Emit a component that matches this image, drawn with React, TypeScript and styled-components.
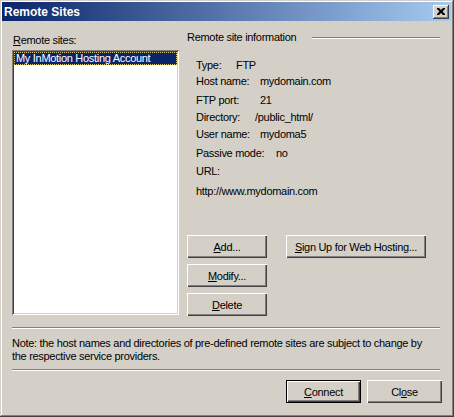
import styled, {createGlobalStyle} from 'styled-components';

const GlobalStyle = createGlobalStyle`
    html, body {
        margin: 0;
        padding: 0;
        background: #d4d0c8;
    }
    * {
        box-sizing: border-box;
    }
`;

interface InfoItem {
    label: string;
    value: string;
    labelWidth: number;
    gap: number;
}

// gap = space above the row, taken from the reference's uneven spacing
const infoItems: InfoItem[] = [
    {label: 'Type:', value: 'FTP', labelWidth: 40, gap: 0},
    {label: 'Host name:', value: 'mydomain.com', labelWidth: 64, gap: 3},
    {label: 'FTP port:', value: '21', labelWidth: 64, gap: 6},
    {label: 'Directory:', value: '/public_html/', labelWidth: 59, gap: 4},
    {label: 'User name:', value: 'mydoma5', labelWidth: 64, gap: 4},
    {label: 'Passive mode:', value: 'no', labelWidth: 80, gap: 6},
    {label: 'URL:', value: '', labelWidth: 40, gap: 5},
    {label: 'http://www.mydomain.com', value: '', labelWidth: 200, gap: 7},
];

function Mnemonic({text, index}: {text: string; index: number}) {
    return (
        <>
            {text.slice(0, index)}
            <u>{text[index]}</u>
            {text.slice(index + 1)}
        </>
    );
}

export default function App() {
    return (
        <>
            <GlobalStyle />
            <Window>
                <TitleBar>
                    <Title>Remote Sites</Title>
                    <CloseBox>
                        <svg width='8' height='7' viewBox='0 0 8 7'>
                            <path
                                d='M0 0h2l2 2 2-2h2v1l-2.5 2.5L8 6v1H6L4 5 2 7H0V6l2.5-2.5L0 1z'
                                fill='#000'
                            />
                        </svg>
                    </CloseBox>
                </TitleBar>

                <Body>
                    <TopSection>
                        <SitesColumn>
                            <FieldLabel>
                                <Mnemonic text='Remote sites:' index={0} />
                            </FieldLabel>
                            <ListBox>
                                <ListItem selected>My InMotion Hosting Account</ListItem>
                            </ListBox>
                        </SitesColumn>

                        <InfoColumn>
                            <GroupHeader>
                                <span>Remote site information</span>
                                <EtchedLine />
                            </GroupHeader>
                            <InfoList>
                                {infoItems.map((item) => (
                                    <InfoRow key={item.label} $gap={item.gap}>
                                        <InfoLabel $width={item.labelWidth}>{item.label}</InfoLabel>
                                        <span>{item.value}</span>
                                    </InfoRow>
                                ))}
                            </InfoList>
                            <ActionGrid>
                                <Button $width={80}>
                                    <Mnemonic text='Add...' index={0} />
                                </Button>
                                <Button $width={140}>
                                    <Mnemonic text='Sign Up for Web Hosting...' index={0} />
                                </Button>
                                <Button $width={80}>
                                    <Mnemonic text='Modify...' index={0} />
                                </Button>
                                <span />
                                <Button $width={80}>
                                    <Mnemonic text='Delete' index={0} />
                                </Button>
                            </ActionGrid>
                        </InfoColumn>
                    </TopSection>

                    <Separator />
                    <Note>
                        Note: the host names and directories of pre-defined remote sites are subject to change by
                        the respective service providers.
                    </Note>
                    <Separator />

                    <Footer>
                        <Button $width={75} $default>
                            <Mnemonic text='Connect' index={0} />
                        </Button>
                        <Button $width={75}>
                            <Mnemonic text='Close' index={2} />
                        </Button>
                    </Footer>
                </Body>
            </Window>
        </>
    );
}

const Window = styled.div`
    width: 454px;
    height: 417px;
    display: flex;
    flex-direction: column;
    background: #d4d0c8;
    padding: 2px 3px 3px 2px;
    box-shadow: inset -1px -1px 0 #404040, inset 1px 1px 0 #d4d0c8, inset -2px -2px 0 #808080,
        inset 2px 2px 0 #ffffff;
    font-family: 'Liberation Sans', Arial, sans-serif;
    font-size: 11px;
    letter-spacing: -0.3px;
    color: #000;
`;

const TitleBar = styled.div`
    height: 19px;
    display: flex;
    align-items: center;
    justify-content: space-between;
    padding: 0 2px 0 2px;
    background: linear-gradient(to right, #0a246a, #a6caf0);
`;

const Title = styled.span`
    color: #fff;
    font-weight: bold;
    font-size: 12px;
    letter-spacing: 0;
`;

const CloseBox = styled.div`
    width: 16px;
    height: 14px;
    display: flex;
    align-items: center;
    justify-content: center;
    background: #d4d0c8;
    box-shadow: inset -1px -1px 0 #404040, inset 1px 1px 0 #ffffff, inset -2px -2px 0 #808080;
`;

const Body = styled.div`
    flex: 1;
    display: flex;
    flex-direction: column;
    padding: 0 9px 0 10px;
`;

const TopSection = styled.div`
    display: flex;
    gap: 7px;
    height: 306px;
`;

const SitesColumn = styled.div`
    width: 167px;
    display: flex;
    flex-direction: column;
`;

const FieldLabel = styled.div`
    margin-top: 13px;
    line-height: 13px;
    padding-left: 1px;
`;

const ListBox = styled.div`
    margin-top: 3px;
    height: 265px;
    background: #fff;
    padding: 2px;
    box-shadow: inset 1px 1px 0 #808080, inset -1px -1px 0 #ffffff, inset 2px 2px 0 #404040,
        inset -2px -2px 0 #d4d0c8;
`;

const ListItem = styled.div<{selected?: boolean}>`
    height: 13px;
    line-height: 11px;
    padding-left: 1px;
    white-space: nowrap;
    overflow: hidden;
    background: ${(p) => (p.selected ? '#0a246a' : 'transparent')};
    color: ${(p) => (p.selected ? '#fff' : '#000')};
    border: 1px dotted ${(p) => (p.selected ? '#d8c878' : 'transparent')};
`;

const InfoColumn = styled.div`
    width: 254px;
    display: flex;
    flex-direction: column;
`;

const GroupHeader = styled.div`
    margin-top: 10px;
    display: flex;
    align-items: center;
    gap: 16px;
    line-height: 13px;
    padding-left: 1px;
`;

const EtchedLine = styled.div`
    flex: 1;
    height: 2px;
    border-top: 1px solid #808080;
    border-bottom: 1px solid #ffffff;
`;

const InfoList = styled.div`
    margin-top: 15px;
    padding-left: 10px;
    display: flex;
    flex-direction: column;
`;

const InfoRow = styled.div<{$gap: number}>`
    margin-top: ${(p) => p.$gap}px;
    height: 13px;
    line-height: 13px;
    display: flex;
    white-space: nowrap;
`;

const InfoLabel = styled.span<{$width: number}>`
    width: ${(p) => p.$width}px;
`;

const ActionGrid = styled.div`
    margin-top: 37px;
    padding-left: 1px;
    display: grid;
    grid-template-columns: 80px auto;
    column-gap: 19px;
    row-gap: 6px;
    justify-content: start;
`;

const Button = styled.button<{$width: number; $default?: boolean}>`
    width: ${(p) => p.$width}px;
    height: 23px;
    padding: 0;
    margin: 0;
    border: none;
    background: #d4d0c8;
    font-family: 'Liberation Sans', Arial, sans-serif;
    font-size: 11px;
    letter-spacing: -0.3px;
    color: #000;
    box-shadow: ${(p) =>
        p.$default
            ? 'inset 1px 1px 0 #000, inset -1px -1px 0 #000, inset 2px 2px 0 #fff, inset -2px -2px 0 #404040, inset -3px -3px 0 #808080'
            : 'inset 1px 1px 0 #fff, inset -1px -1px 0 #404040, inset -2px -2px 0 #808080'};
`;

const Separator = styled.div`
    width: 428px;
    height: 2px;
    border-top: 1px solid #808080;
    border-bottom: 1px solid #ffffff;
`;

const Note = styled.p`
    max-width: 420px;
    margin: 8px 0 6px;
    line-height: 13px;
`;

const Footer = styled.div`
    display: flex;
    justify-content: flex-end;
    gap: 6px;
    margin-top: 9px;
    width: 430px;
`;
